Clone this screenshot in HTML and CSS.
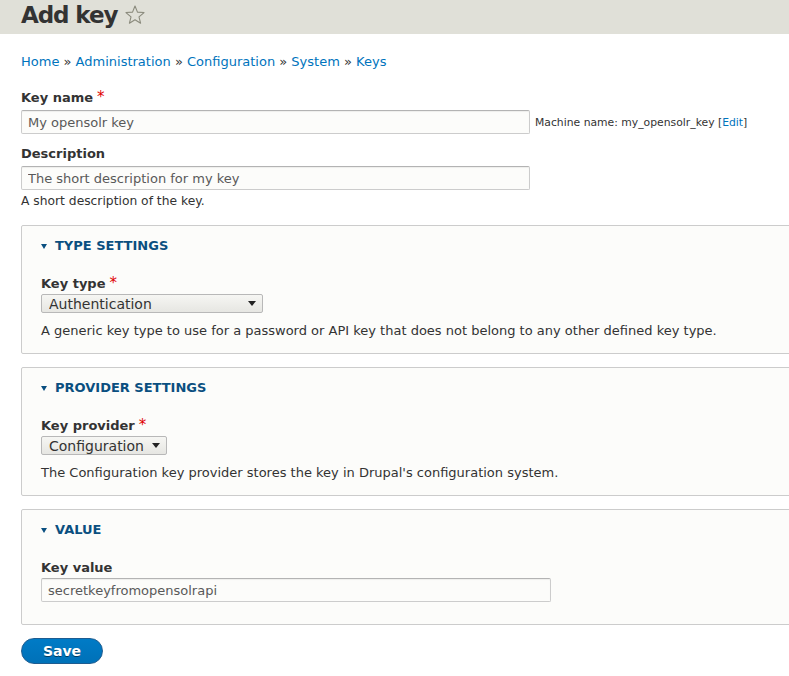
FILE: index.html
```html
<!DOCTYPE html>
<html lang="en">
<head>
    <meta charset="UTF-8">
    <title>Add key</title>
    <link rel="stylesheet" href="styles.css">
</head>
<body>
    <div class="page-header">
        <h1 class="page-title">Add key</h1>
        <svg class="shortcut-star" width="20" height="20" viewBox="0 0 20 20" aria-hidden="true">
            <polygon points="10,1 12.47,7.1 19.03,7.56 13.99,11.8 15.58,18.19 10,14.7 4.42,18.19 6.01,11.8 0.97,7.56 7.53,7.1"/>
        </svg>
    </div>

    <div class="content">
        <nav class="breadcrumb">
            <a href="#">Home</a> » <a href="#">Administration</a> » <a href="#">Configuration</a> » <a href="#">System</a> » <a href="#">Keys</a>
        </nav>

        <form class="key-form">
            <div class="form-item">
                <label for="keyLabel">Key name<span class="required">*</span></label>
                <div class="machine-name-row">
                    <input type="text" id="keyLabel" class="form-text" value="My opensolr key">
                    <span class="machine-name">Machine name: my_opensolr_key [<a href="#">Edit</a>]</span>
                </div>
            </div>

            <div class="form-item">
                <label for="keyDescription">Description</label>
                <input type="text" id="keyDescription" class="form-text" value="The short description for my key">
                <div class="description">A short description of the key.</div>
            </div>

            <div class="fieldset">
                <div class="legend"><span class="arrow"></span>Type settings</div>
                <div class="form-item">
                    <label for="keyType">Key type<span class="required">*</span></label>
                    <span class="select-wrap">
                        <select id="keyType" class="form-select select-type">
                            <option>Authentication</option>
                        </select>
                    </span>
                    <div class="description">A generic key type to use for a password or API key that does not belong to any other defined key type.</div>
                </div>
            </div>

            <div class="fieldset">
                <div class="legend"><span class="arrow"></span>Provider settings</div>
                <div class="form-item">
                    <label for="keyProvider">Key provider<span class="required">*</span></label>
                    <span class="select-wrap">
                        <select id="keyProvider" class="form-select select-provider">
                            <option>Configuration</option>
                        </select>
                    </span>
                    <div class="description">The Configuration key provider stores the key in Drupal's configuration system.</div>
                </div>
            </div>

            <div class="fieldset">
                <div class="legend"><span class="arrow"></span>Value</div>
                <div class="form-item form-item--last">
                    <label for="keyValue">Key value</label>
                    <input type="text" id="keyValue" class="form-text form-text--wide" value="secretkeyfromopensolrapi">
                </div>
            </div>

            <button type="button" class="button button--primary">Save</button>
        </form>
    </div>
</body>
</html>
```

FILE: styles.css
```css
html, body { overflow-x: hidden; }
body { margin: 0; font-family: "DejaVu Sans", sans-serif; font-size: 13px; color: #333; background: #fff; }
a { color: #0074bd; text-decoration: none; }

.page-header { display: flex; align-items: flex-start; gap: 8px; height: 34px; padding: 0 21px; background: #e0e0d8; box-sizing: border-box; }
.page-title { margin: 0; font-size: 23px; line-height: 31px; font-weight: bold; letter-spacing: -1.1px; color: #333; }
.shortcut-star { margin-top: 5px; }
.shortcut-star polygon { fill: none; stroke: #8a8a7c; stroke-width: 1.1; stroke-linejoin: round; }

.content { padding: 20px 0 0 21px; }
.breadcrumb { line-height: 16px; margin-bottom: 20px; }

.form-item { margin-bottom: 12px; }
.form-item label { display: block; font-weight: bold; line-height: 16px; margin-bottom: 4px; }
.required { color: #e00000; font-size: 15px; line-height: 1; vertical-align: top; margin-left: 4px; font-weight: normal; }

.form-text { display: block; box-sizing: border-box; width: 509px; height: 24px; padding: 0 6px; margin: 0; border: 1px solid #ccc; border-top-color: #b3b3b3; border-radius: 2px; background: #fcfcfa; box-shadow: inset 0 1px 1px rgba(0,0,0,0.06); font-family: "DejaVu Sans", sans-serif; font-size: 13px; color: #595959; }
.form-text--wide { width: 510px; }

.machine-name-row { display: flex; align-items: center; gap: 5px; }
.machine-name { font-size: 10.8px; color: #333; }

.description { margin-top: 3px; font-size: 12.3px; line-height: 16px; color: #333; }

.form-item + .fieldset { margin-top: 16px; }
.fieldset { margin: 0 -30px 13px 0; padding: 12px 20px 14px 19px; border: 1px solid #ccc; border-radius: 2px; background: #fcfcfa; }
.legend { line-height: 16px; margin-bottom: 22px; font-weight: bold; text-transform: uppercase; color: #0a4f80; }
.legend .arrow { display: inline-block; width: 0; height: 0; margin: 0 8px 1px 0; border-left: 3.5px solid transparent; border-right: 3.5px solid transparent; border-top: 5.5px solid #0a4f80; vertical-align: middle; }
.fieldset .form-item { margin-bottom: 0; }
.fieldset .form-item--last { margin-bottom: 8px; }
.fieldset .form-item label { margin-bottom: 2px; }
.fieldset .description { margin-top: 10px; font-size: 13px; }

.select-wrap { position: relative; display: inline-block; vertical-align: top; }
.select-wrap::after { content: ""; position: absolute; right: 7px; top: 7px; border-left: 4px solid transparent; border-right: 4px solid transparent; border-top: 5px solid #222; pointer-events: none; }
.form-select { display: block; box-sizing: border-box; height: 19px; margin: 0; padding: 0 20px 0 7px; -webkit-appearance: none; appearance: none; border: 1px solid #b8b8b8; border-radius: 2px; background: linear-gradient(#f6f6f3, #e6e6e2); font-family: "DejaVu Sans", sans-serif; font-size: 14px; color: #333; }
.select-type { width: 222px; }
.select-provider { width: 126px; }

.button { font-family: "DejaVu Sans", sans-serif; cursor: pointer; }
.button--primary { display: block; box-sizing: border-box; width: 82px; height: 26px; padding: 0; border: 1px solid #1e5c90; border-radius: 20px; background: linear-gradient(#007bc6, #0071b8); color: #fff; font-size: 14px; font-weight: bold; text-shadow: 0 1px rgba(0,0,0,0.5); }
```
